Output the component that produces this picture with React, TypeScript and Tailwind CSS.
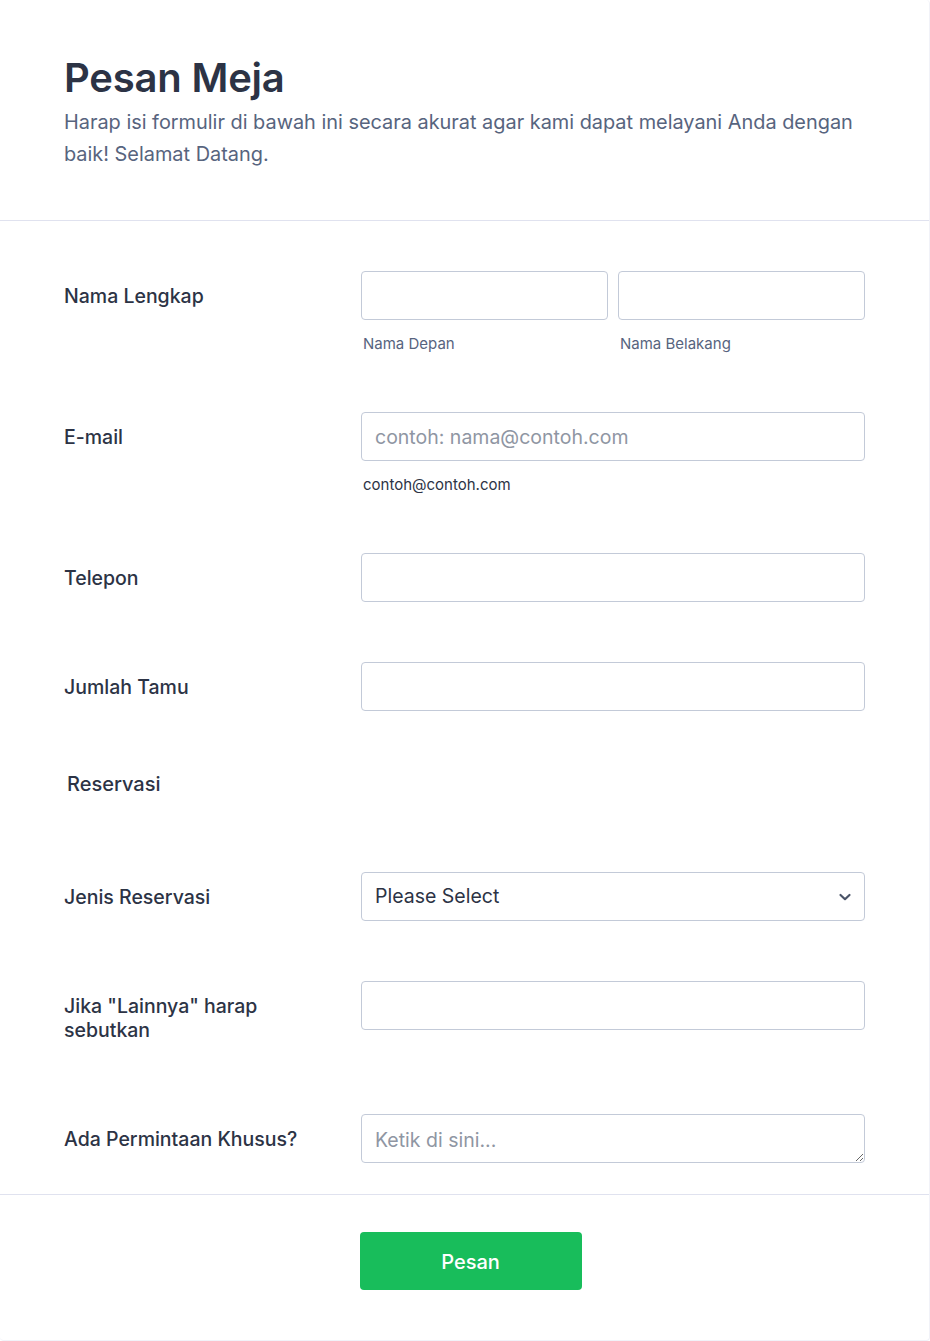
import React from "react";

const font = { fontFamily: "Inter, 'Noto Sans', sans-serif" };

function Label({ children }: { children: React.ReactNode }) {
  return (
    <div className="w-[297px] shrink-0 pt-[13px] pb-[12px] pr-6 text-[19.5px] leading-6 font-medium text-[#2c3345]">
      {children}
    </div>
  );
}

const inputCls =
  "block w-full h-[49px] rounded-[4px] border border-[#c3cad8] bg-white px-[13px] text-[19.5px] text-[#2c3345] placeholder:text-[#8f96a3] outline-none";

export default function App() {
  return (
    <div style={font} className="min-h-[1341px] w-[930px] bg-white">
      <div className="w-[930px] h-[1341px] rounded-[4px] border-r border-b border-[#f1f2f8] bg-white flex flex-col">
        {/* header */}
        <div className="px-16 pt-[54px] pb-[50px] border-b border-[#e0e2ef]">
          <h1 className="text-[40px] leading-[48px] font-semibold tracking-[-0.2px] text-[#2c3345]">Pesan Meja</h1>
          <p className="mt-[4px] text-[19.9px] leading-8 text-[#57647e]">
            Harap isi formulir di bawah ini secara akurat agar kami dapat melayani Anda dengan baik! Selamat Datang.
          </p>
        </div>

        {/* form body */}
        <div className="pl-16 pr-16 pt-[50px]">
          {/* Nama Lengkap */}
          <div className="flex">
            <Label>Nama Lengkap</Label>
            <div className="flex-1 flex gap-[10px]">
              <div className="flex-1">
                <input className={inputCls} />
                <div className="mt-[14px] pl-[2px] text-[15px] leading-5 text-[#57647e]">Nama Depan</div>
              </div>
              <div className="flex-1">
                <input className={inputCls} />
                <div className="mt-[14px] pl-[2px] text-[15px] leading-5 text-[#57647e]">Nama Belakang</div>
              </div>
            </div>
          </div>

          {/* E-mail */}
          <div className="flex mt-[58px]">
            <Label>E-mail</Label>
            <div className="flex-1">
              <input className={inputCls} placeholder="contoh: nama@contoh.com" />
              <div className="mt-[14px] pl-[2px] text-[15px] leading-5 text-[#2c3345]">contoh@contoh.com</div>
            </div>
          </div>

          {/* Telepon */}
          <div className="flex mt-[58px]">
            <Label>Telepon</Label>
            <div className="flex-1">
              <input className={inputCls} />
            </div>
          </div>

          {/* Jumlah Tamu */}
          <div className="flex mt-[60px]">
            <Label>Jumlah Tamu</Label>
            <div className="flex-1">
              <input className={inputCls} />
            </div>
          </div>

          {/* Reservasi heading */}
          <div className="mt-[60px] h-[41px] pl-[3px] text-[20px] leading-[26px] font-medium text-[#2c3345]">
            Reservasi
          </div>

          {/* Jenis Reservasi */}
          <div className="flex mt-[60px]">
            <Label>Jenis Reservasi</Label>
            <div className="flex-1">
              <div className="relative h-[49px] rounded-[4px] border border-[#c3cad8] bg-white flex items-center px-[13px] text-[19.5px] text-[#2c3345]">
                Please Select
                <svg
                  className="absolute right-[11px] top-1/2 -translate-y-1/2"
                  width="16"
                  height="16"
                  viewBox="0 0 16 16"
                  fill="none"
                >
                  <path d="M3.5 6 L8 10.2 L12.5 6" stroke="#4a5468" strokeWidth="2.2" strokeLinecap="round" strokeLinejoin="round" />
                </svg>
              </div>
            </div>
          </div>

          {/* Jika Lainnya */}
          <div className="flex mt-[60px]">
            <Label>
              Jika "Lainnya" harap
              <br />
              sebutkan
            </Label>
            <div className="flex-1">
              <input className={inputCls} />
            </div>
          </div>

          {/* Ada Permintaan Khusus */}
          <div className="flex mt-[60px]">
            <Label>Ada Permintaan Khusus?</Label>
            <div className="flex-1">
              <textarea
                className="block w-full h-[49px] rounded-[4px] border border-[#c3cad8] bg-white px-[13px] pt-[13px] pb-[10px] text-[19.5px] leading-6 text-[#2c3345] placeholder:text-[#8f96a3] outline-none resize-y"
                placeholder="Ketik di sini..."
              />
            </div>
          </div>
        </div>

        {/* footer */}
        <div className="mt-[31px] border-t border-[#e0e2ef] flex justify-center pt-[37px]">
          <button className="ml-[12px] w-[222px] h-[58px] pt-[2px] rounded-[4px] bg-[#18bd5b] text-white text-[20px] font-medium">
            Pesan
          </button>
        </div>
      </div>
    </div>
  );
}
